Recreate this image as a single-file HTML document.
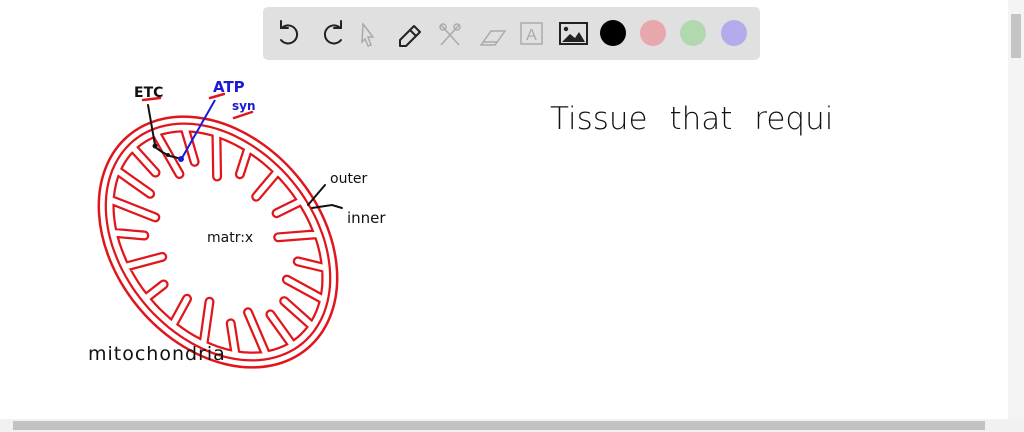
<!DOCTYPE html>
<html><head><style>
html,body{margin:0;padding:0;width:1024px;height:432px;overflow:hidden;background:#fff;position:relative;font-family:"Liberation Sans",sans-serif}
.tb{position:absolute;left:263px;top:7px;width:497px;height:53px;background:#e0e0e0;border-radius:5px}
.vs{position:absolute;left:1008px;top:0;width:16px;height:420px;background:#f4f4f4}
.vt{position:absolute;left:1011px;top:14px;width:10px;height:44px;background:#c4c4c4}
.hs{position:absolute;left:0;top:419px;width:1024px;height:13px;background:#f1f1f1}
.ht{position:absolute;left:13px;top:421px;width:972px;height:9px;background:#c2c2c2}
.txt{position:absolute;left:550px;top:101px;font-size:31px;color:#111;letter-spacing:0px;word-spacing:12px;font-family:"DejaVu Sans","Liberation Sans",sans-serif;font-weight:300}
</style></head><body>
<div class="tb">
<svg width="497" height="53" viewBox="0 0 497 53">
 <g fill="none" stroke="#222" stroke-width="2" stroke-linecap="round">
  <path d="M20 20 A9 9 0 1 1 18 33"/><path d="M18 14 L18 21 L25 21"/>
  <path d="M76 20 A9 9 0 1 0 78 33"/><path d="M78 14 L78 21 L71 21"/>
 </g>
 <path d="M100 17 L110 30 L105 30 L108 38 L105 39 L102 32 L99 35 Z" fill="none" stroke="#aaa" stroke-width="1.5"/>
 <path d="M137 33 L151 19 L157 25 L143 39 L137 39 Z M147 23 L153 29" fill="none" stroke="#222" stroke-width="2" stroke-linejoin="round"/>
 <g stroke="#aaa" stroke-width="1.5" fill="none"><path d="M178 18 L196 38 M196 18 L178 38"/><circle cx="180" cy="20" r="3"/><circle cx="194" cy="20" r="3"/></g>
 <path d="M218 38 L228 24 L242 24 L232 38 Z M220 35 L234 35" fill="none" stroke="#aaa" stroke-width="1.5"/>
 <rect x="258" y="16" width="21" height="21" fill="none" stroke="#aaa" stroke-width="1.5"/>
 <text x="268.5" y="33" font-size="16" text-anchor="middle" fill="#aaa" font-family="Liberation Sans">A</text>
 <rect x="297" y="16" width="27" height="21" fill="none" stroke="#222" stroke-width="2"/>
 <circle cx="303" cy="22" r="2.2" fill="#222"/><path d="M299 35 L307 27 L312 31 L316 25 L322 35 Z" fill="#222"/>
 <circle cx="350" cy="26" r="13" fill="#000"/>
 <circle cx="390" cy="26" r="13" fill="#e8a6ad"/>
 <circle cx="430" cy="26" r="13" fill="#b2d8b0"/>
 <circle cx="471" cy="26" r="13" fill="#b2acec"/>
</svg></div>
<svg style="position:absolute;left:0;top:0" width="1008" height="419">
 <ellipse cx="218" cy="242" rx="139" ry="103" transform="rotate(50 218 242)" fill="none" stroke="#e0161c" stroke-width="2.5"/>
 <g fill="none" stroke-linecap="round" stroke-linejoin="round">
  <path id="m1" stroke="#e0161c" stroke-width="10" d=""/>
  <path id="m2" stroke="#fff" stroke-width="5.5" d=""/>
 </g>
 <g stroke="#e0161c" stroke-width="2.5" stroke-linecap="round">
  <path d="M143 100 L160 98 M210 98 L224 94 M234 118 L252 112"/>
 </g>
 <g fill="none" stroke="#111" stroke-width="2" stroke-linecap="round">
  <path d="M148 105 L155 145"/><path d="M155 147 L162 152 L170 156 L178 158"/>
  <path d="M308 205 L325 185 M312 208 L332 205 L342 208"/>
 </g>
 <circle cx="155" cy="146" r="2.5" fill="#111"/><circle cx="168" cy="155" r="2" fill="#111"/>
 <path d="M182 158 L215 100" stroke="#1a1ad8" stroke-width="2" fill="none"/>
 <circle cx="181" cy="159" r="3" fill="#1a1ad8"/>
 <g font-family="DejaVu Sans,Liberation Sans,sans-serif" fill="#111" font-weight="bold">
  <text x="134" y="97" font-size="14">ETC</text>
  <text x="213" y="92" font-size="15" fill="#1a1ad8">ATP</text>
  <text x="232" y="110" font-size="12" fill="#1a1ad8">syn</text>
  <text x="330" y="183" font-size="14" font-weight="normal">outer</text>
  <text x="347" y="223" font-size="15" font-weight="normal">inner</text>
  <text x="207" y="242" font-size="14" font-weight="normal">matr:x</text>
  <text x="88" y="360" font-size="19" font-weight="normal" letter-spacing="1">mitochondria</text>
 </g>
</svg>
<script>
(function(){
 var cx=218,cy=242,rx=128,ry=92,a=50*Math.PI/180,ca=Math.cos(a),sa=Math.sin(a);
 function P(t,s){var x=rx*s*Math.cos(t),y=ry*s*Math.sin(t);return [cx+x*ca-y*sa,cy+x*sa+y*ca];}
 var d="";
 for(var i=0;i<=120;i++){var p=P(i/120*2*Math.PI,1);d+=(i?"L":"M")+p[0].toFixed(1)+" "+p[1].toFixed(1);}
 var n=21,lens=[0.30,0.38,0.28,0.42,0.32,0.25,0.4,0.3,0.42,0.33,0.27,0.38,0.3,0.4,0.28,0.36,0.3,0.4,0.26,0.35,0.3];
 for(var k=0;k<n;k++){
  var t=k/n*2*Math.PI+0.1;
  var p1=P(t,1),p2=P(t,1-lens[k]);
  d+="M"+p1[0].toFixed(1)+" "+p1[1].toFixed(1)+"L"+p2[0].toFixed(1)+" "+p2[1].toFixed(1);
 }
 document.getElementById("m1").setAttribute("d",d);
 document.getElementById("m2").setAttribute("d",d);
})();
</script>
<div class="txt">Tissue that requi</div>
<div class="vs"></div><div class="vt"></div>
<div class="hs"></div><div class="ht"></div>
</body></html>
